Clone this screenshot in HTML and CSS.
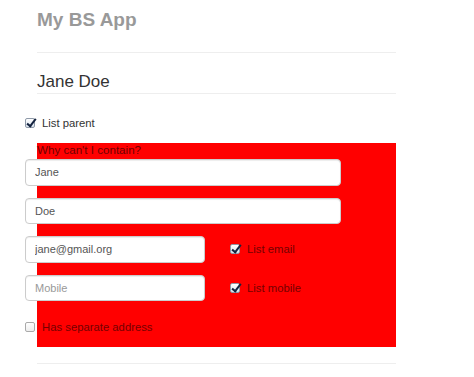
FILE: index.html
```html
<!DOCTYPE html>
<html>
<head>
<meta charset="utf-8">
<title>My BS App</title>
<link rel="stylesheet" href="styles.css">
</head>
<body>
<div class="page">
  <h1 class="brand">My BS App</h1>
  <div class="rule"></div>
  <h2 class="name">Jane Doe</h2>
  <form class="form">
    <label class="check parent"><input type="checkbox" class="cb" checked><span>List parent</span></label>
    <div class="red-box">
      <div class="why">Why can't I contain?</div>
      <div class="field"><input type="text" class="input wide" value="Jane"></div>
      <div class="field"><input type="text" class="input wide" value="Doe"></div>
      <div class="field">
        <input type="text" class="input narrow" value="jane@gmail.org">
        <label class="check on-red side"><input type="checkbox" class="cb" checked><span>List email</span></label>
      </div>
      <div class="field">
        <input type="text" class="input narrow" placeholder="Mobile">
        <label class="check on-red side"><input type="checkbox" class="cb" checked><span>List mobile</span></label>
      </div>
      <label class="check on-red address"><input type="checkbox" class="cb plain"><span>Has separate address</span></label>
    </div>
  </form>
  <div class="rule bottom"></div>
</div>
</body>
</html>
```
FILE: styles.css
```css
html, body {
  margin: 0;
  padding: 0;
  background: #fff;
}
body {
  font-family: "Liberation Sans", Arial, Helvetica, sans-serif;
  color: #333;
}
.page {
  width: 359px;
  margin-left: 37px;
}
.brand {
  margin: 10px 0 0;
  font-size: 19px;
  line-height: 20px;
  font-weight: bold;
  color: #999;
}
.rule {
  height: 1px;
  background: #eee;
  margin-top: 22px;
}
.rule.bottom {
  margin-top: 16px;
}
.name {
  margin: 19px 0 0;
  font-size: 17px;
  line-height: 20px;
  font-weight: normal;
  color: #333;
  padding-bottom: 1px;
  border-bottom: 1px solid #eee;
}
.form {
  margin: 0;
}
.check {
  display: flex;
  align-items: center;
  gap: 7px;
  font-size: 11.3px;
  line-height: 14px;
  color: #333;
}
.check.parent {
  margin: 22px 0 0 -12px;
}
.check.on-red {
  color: #750000;
}
.check.side {
  margin-left: 25px;
}
.check.address {
  margin: 19px 0 0 -12px;
}
.cb {
  appearance: none;
  -webkit-appearance: none;
  box-sizing: border-box;
  width: 10px;
  height: 10px;
  margin: 0;
  border: 1px solid #8e99a8;
  border-radius: 2px;
  background: linear-gradient(#ffffff, #d9e3ee);
  position: relative;
  flex: none;
}
.cb.plain {
  border-color: #aaa;
  background: linear-gradient(#ffffff, #eeeeee);
}
.cb:checked::after {
  content: "";
  position: absolute;
  left: 2.5px;
  top: -2px;
  width: 3px;
  height: 8px;
  border: solid #14233f;
  border-width: 0 2px 2px 0;
  transform: rotate(38deg);
}
.red-box {
  margin-top: 13px;
  background: #ff0000;
  padding-bottom: 13px;
  display: flex;
  flex-direction: column;
}
.why {
  font-size: 11.6px;
  line-height: 13px;
  height: 16px;
  color: #6e0000;
}
.field {
  display: flex;
  align-items: center;
  margin-left: -12px;
  margin-top: 12px;
}
.why + .field {
  margin-top: 0;
}
.input {
  box-sizing: border-box;
  height: 26.5px;
  margin: 0;
  padding: 0 9px;
  border: 1px solid #ccc;
  border-radius: 4px;
  background: #fff;
  box-shadow: inset 0 1px 1px rgba(0,0,0,0.075);
  font-family: "Liberation Sans", Arial, Helvetica, sans-serif;
  font-size: 11px;
  color: #555;
  outline: none;
}
.input::placeholder {
  color: #999;
}
.input.wide {
  width: 316px;
}
.input.narrow {
  width: 180px;
}
```
